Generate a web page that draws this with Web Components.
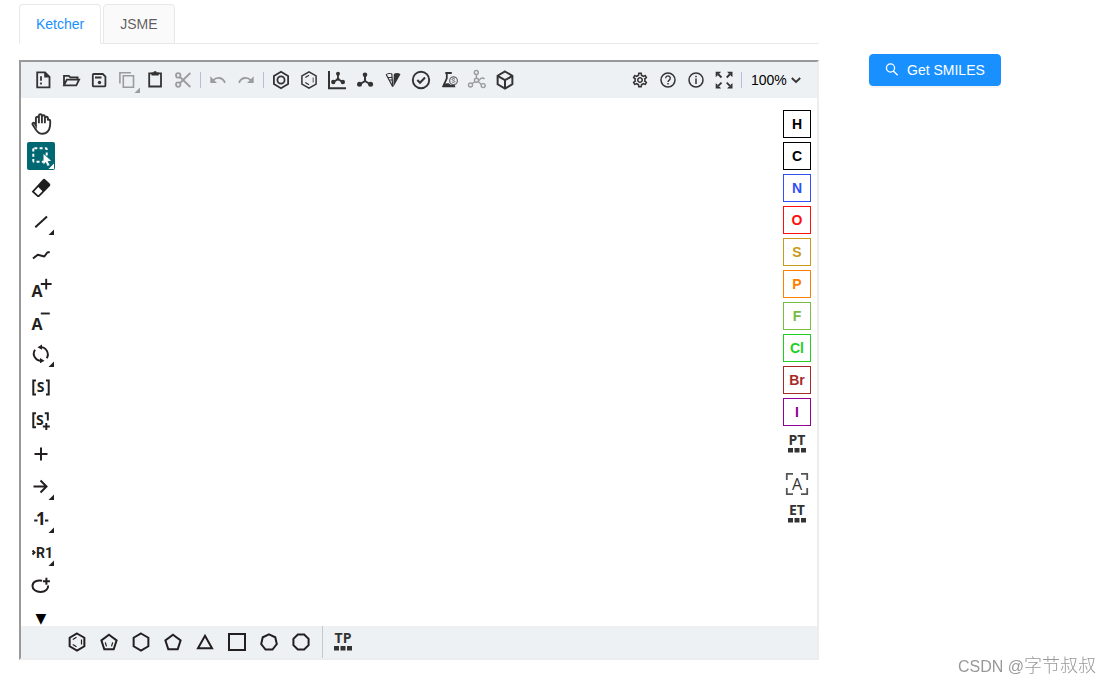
<!DOCTYPE html>
<html lang="en">
<head>
<meta charset="utf-8">
<meta name="viewport" content="width=device-width, initial-scale=1">
<title>Structure editor</title>
<style>
  :root {
    --primary: #1890ff;
    --bar-bg: #edf1f4;
    --icon: #333333;
    --icon-dim: #9a9c9f;
    --active-bg: #006873;
    --line: #e8e8e8;
  }

  body {
    margin: 0;
    background: #fff;
    font-family: "Liberation Sans", Arial, sans-serif;
    font-size: 14px;
    color: rgba(0, 0, 0, 0.65);
  }
</style>
</head>
<body>
<sketch-page>
  <tab-strip slot="main" tabs="Ketcher,JSME" active="Ketcher"></tab-strip>
  <ketcher-editor slot="main"></ketcher-editor>
  <search-button slot="side">Get SMILES</search-button>
  <page-mark slot="mark">CSDN @<span slot="cjk">字节叔叔</span></page-mark>
</sketch-page>

<script>
/**
 * Icon artwork, every icon on a 28x28 grid.
 * Default paint is a stroke in currentColor, ".f" parts are filled.
 */
const poly = (n, r, cy = 14, turn = -90) => {
  const pts = [];
  for (let i = 0; i < n; i++) {
    const a = ((turn + (360 / n) * i) * Math.PI) / 180;
    pts.push(`${(14 + r * Math.cos(a)).toFixed(2)},${(cy + r * Math.sin(a)).toFixed(2)}`);
  }
  return `<polygon points="${pts.join(" ")}"/>`;
};

const DOTS = `<path class="f" d="M5 18h5v4.500h-5zM11.500 18h5v4.500h-5zM18 18h5v4.500h-5z"/>`;

const ICONS = {
  "new": `<path d="M8.200 6.300h7.800l4.500 4.500v10.500H8.200z"/><path class="f" d="M15.200 6v5.600h5.600z"/><path d="M12 10.300v4.500M12 16.600v1.800"/>`,
  "open": `<path d="M7 19V9.800h4.800l1.600 1.600h7.200v2.200M7 19.300l2.800-5.600h12.300l-2.800 5.600z"/>`,
  "save": `<path d="M8.800 8h9l2.600 2.600v8.800a1 1 0 0 1-1 1H8.800a1 1 0 0 1-1-1V9a1 1 0 0 1 1-1zM10 11.500h6.500"/><circle class="f" cx="14.500" cy="16.500" r="1.700"/>`,
  "copy": `<path d="M6.900 17.500V6.800h11M10.300 9.800h10.200v11.400H10.300z" stroke-width="1.600"/>`,
  "paste": `<path d="M8.200 7.300h11.800v13.200H8.200z"/><path class="f" d="M10.500 6.500h2a1.600 1.600 0 0 1 3.200 0h2v3h-7.200z"/>`,
  "cut": `<circle cx="9.200" cy="9.400" r="2.200"/><circle cx="9.200" cy="18.600" r="2.200"/><path d="M11 11l10.300 10M11 17L21.300 7"/>`,
  "undo": `<path d="M9 14.400c3.500-3.600 9.600-3.600 12 2.400"/><path class="f" d="M6.300 10.300v6.700h6.700z"/>`,
  "redo": `<path d="M19 14.400c-3.500-3.600-9.600-3.600-12 2.400"/><path class="f" d="M21.700 10.300v6.700h-6.700z"/>`,
  "arom": poly(6, 8.2) + `<circle cx="14" cy="14" r="3.600"/>`,
  "dearom": `<g stroke-width="1.500">${poly(6, 8.2)}<path d="M10.300 11.500l3.700-2.200M10.300 16.500l3.700 2.200" stroke-width="1.200"/><path d="M18.200 11.500v5" stroke="#8a8c8f"/></g>`,
  "layout": `<path d="M6 5v17.200h17" stroke-width="2"/><path d="M15 7.800v5.200l-4.500 3M15 13l4.500 3"/><g class="f"><circle cx="15" cy="7.800" r="2"/><circle cx="10.300" cy="16" r="2.200"/><circle cx="19.800" cy="16" r="2.200"/><circle cx="15" cy="13" r="1.500"/></g>`,
  "clean": `<path d="M14 9v6l-5.500 3.500M14 15l5.500 3.500" stroke-width="2"/><g class="f"><circle cx="14" cy="8.800" r="2.300"/><circle cx="8.500" cy="18.300" r="2.500"/><circle cx="19.600" cy="18.300" r="2.500"/></g>`,
  "cip": `<path class="f" d="M14.300 21l.5-13c2.200-1.400 4.600-1.200 6.700.3z"/><path d="M7.200 8.500l6.500 12.300M12.800 7.800l.9 12.500" stroke-width="1.200"/><path d="M7 8.700c2-1.500 4-1.500 6-.7M9 11.500h4M10.500 14h2.800" stroke-width="1"/>`,
  "check": `<circle cx="14" cy="14" r="8.200" stroke-width="1.900"/><path d="M10.300 14l2.700 2.700 5-5.200" stroke-width="2"/>`,
  "calc": `<path d="M10.300 7h6.500M11.800 7v5.300L8.300 20h11.500"/><path class="f" d="M9 17.500l-1.500 3.700h13l-1-2-4-.5-2-1.500z"/><circle cx="18.500" cy="14.800" r="3.900" fill="#edf1f4" stroke="#66686b" stroke-width="1.200"/><path d="M20 13.300c-1-1-3-.8-3 .2s2.800 1 2.800 2-2 1.200-3 .3" stroke="#66686b" stroke-width="1"/>`,
  "mole": `<g stroke-width="1.400"><circle cx="13.300" cy="6.500" r="2"/><circle cx="13.500" cy="14.300" r="2"/><circle cx="7.500" cy="19" r="2"/><circle cx="20.200" cy="19.600" r="2"/><path d="M13.400 8.500v3.800M12 15.600l-3 2.200M15.200 15.500l3.200 2.900M15.500 14.300c1.500.2 1.500-2.300 3.500-2.300 1 0 2 .3 2.500 1"/></g>`,
  "cube": `<g stroke-width="2">${poly(6, 8.5)}<path d="M7 10.200l7 4 7-4M14 14.200v8"/></g>`,
  "settings": `<g class="f" transform="translate(5 5) scale(.75)"><path d="M19.430 12.980c.04-.32.07-.64.07-.98 0-.34-.03-.66-.07-.98l2.110-1.650c.19-.15.24-.42.12-.64l-2-3.460c-.09-.16-.26-.25-.44-.25-.06 0-.12.01-.17.03l-2.490 1c-.52-.4-1.080-.73-1.690-.98l-.38-2.650C14.460 2.180 14.250 2 14 2h-4c-.25 0-.46.18-.49.42l-.38 2.650c-.61.25-1.170.59-1.690.98l-2.490-1c-.06-.02-.12-.03-.18-.03-.17 0-.34.09-.43.25l-2 3.460c-.13.22-.07.49.12.64l2.110 1.650c-.04.32-.07.65-.07.98 0 .33.03.66.07.98l-2.110 1.650c-.19.15-.24.42-.12.64l2 3.460c.09.16.26.25.44.25.06 0 .12-.01.17-.03l2.490-1c.52.4 1.080.73 1.690.98l.38 2.650c.03.24.24.42.49.42h4c.25 0 .46-.18.49-.42l.38-2.650c.61-.25 1.170-.59 1.690-.98l2.490 1c.06.02.12.03.18.03.17 0 .34-.09.43-.25l2-3.460c.12-.22.07-.49-.12-.64l-2.110-1.650zm-1.980-1.710c.04.31.05.52.05.73 0 .21-.02.43-.05.73l-.14 1.130.89.7 1.080.84-.7 1.210-1.270-.51-1.040-.42-.9.68c-.43.32-.84.56-1.250.73l-1.060.43-.16 1.130-.2 1.350h-1.400l-.19-1.350-.16-1.130-1.060-.43c-.43-.18-.83-.41-1.230-.71l-.91-.7-1.060.43-1.270.51-.7-1.210 1.080-.84.89-.7-.14-1.130c-.03-.31-.05-.54-.05-.74s.02-.43.05-.73l.14-1.130-.89-.7-1.080-.84.7-1.210 1.270.51 1.040.42.9-.68c.43-.32.84-.56 1.250-.73l1.060-.43.16-1.130.2-1.350h1.390l.19 1.350.16 1.130 1.060.43c.43.18.83.41 1.230.71l.91.7 1.060-.43 1.270-.51.7 1.210-1.070.85-.89.7.14 1.130zM12 8c-2.210 0-4 1.790-4 4s1.790 4 4 4 4-1.790 4-4-1.790-4-4-4zm0 6c-1.100 0-2-.9-2-2s.9-2 2-2 2 .9 2 2-.9 2-2 2z"/></g>`,
  "help": `<circle cx="14" cy="14" r="7" stroke-width="1.500"/><path d="M11.700 12.300a2.300 2.300 0 1 1 3.700 1.700c-.9.7-1.400 1-1.400 2M14 17v1.500" stroke-width="1.400"/>`,
  "info": `<circle cx="14" cy="14" r="7" stroke-width="1.500"/><path d="M14 12.500v5.500M14 9.800v1.400" stroke-width="1.500"/>`,
  "fullscreen": `<path d="M7.500 7.500l4 4M20.700 7.500l-4 4M7.500 20.700l4-4M20.700 20.700l-4-4"/><path class="f" d="M5.700 5.700h5.300l-1.300 1.800H7.500v2.200L5.700 11zM22.500 5.700v5.300l-1.800-1.300V7.500h-2.200L17.200 5.700zM5.700 22.500v-5.300l1.800 1.300v2.200h2.200l1.300 1.800zM22.500 22.500h-5.300l1.300-1.800h2.200v-2.200l1.800-1.300z"/>`,
  "hand": `<path d="M8.900 15.500V8.300a1.500 1.500 0 0 1 3 0v5V5.800a1.500 1.500 0 0 1 3 0v7.500-6.500a1.500 1.500 0 0 1 3 0v6.500-5a1.500 1.500 0 0 1 3 0v2.200a1.200 1.200 0 0 1 2.300.3c.2 3.700-.1 7.700-2 10-1.500 1.900-3.300 2.900-5.800 2.900-3.400 0-5-1.800-6.300-3.800l-3.500-5.300c-.7-1.300.8-2.300 1.900-1.500z" stroke-width="1.900"/>`,
  "select": `<rect x="6.300" y="6.300" width="13.400" height="13.400" rx="1" stroke-dasharray="3 2.300" stroke-width="2"/><path class="f" d="M16.500 12l7.600 6.800-3.500.4 2 3.900-2 1-1.900-4-2.200 2.400z" stroke="#006873" stroke-width=".6"/>`,
  "erase": `<path d="M5.900 17.600L16.400 6.100a1 1 0 0 1 1.400 0l4.300 4a1 1 0 0 1 0 1.500L12 21.800a1 1 0 0 1-1.400 0z" stroke="#1e1e1e" stroke-width="1.700"/><path fill="#1e1e1e" stroke="none" d="M10.600 12.200l6-6.300h1.500l4.400 4.400v1.300l-6.200 6.300z"/>`,
  "bond": `<path d="M8.300 19.300L20 8.500" stroke-width="2"/>`,
  "chain": `<path d="M6 17.500l4.800-3.800 6.500 1.800 3-4 2.400-.5" stroke-width="2" stroke-linejoin="round"/>`,
  "charge-plus": `<text x="4.500" y="23" font-size="16">A</text><path d="M19.200 4.800v10.600M13.800 10h10.800" stroke-width="1.900"/>`,
  "charge-minus": `<text x="4.500" y="22.500" font-size="16">A</text><path d="M13.800 6.500h9" stroke-width="1.900"/>`,
  "rotate": `<path d="M19.700 18.200a7.200 7.200 0 0 0-6.700-11M8 9.700a7.200 7.200 0 0 0 6.700 11.100" stroke-width="1.900"/><path class="f" d="M10.500 7.300l4.500-2.800v5.200zM17.500 20.700l-4.500-2.600v5.200z"/>`,
  "sgroup": `<path d="M9 7.500H6.300v14H9M19 7.500h2.700v14H19" stroke-width="2"/><text x="9.800" y="19" font-size="14">S</text>`,
  "sgroup-data": `<path d="M9 7.300H6.300v14H9M17.800 7.300h3v7.200M19.300 17v7M15.800 20.500h7" stroke-width="2"/><text x="9" y="18.500" font-size="14">S</text>`,
  "plus": `<path d="M14 7.500v13M7.500 14h13" stroke-width="2"/>`,
  "arrow": `<path d="M6.500 13.500h12.800M13.500 7.500l6 6-6 6" stroke-width="2"/>`,
  "map": `<path d="M7.200 14.500h3.300M18 14.500h3.300" stroke-width="2"/><text x="9" y="19" font-size="17">1</text>`,
  "rgroup": `<path d="M5.500 11.500l2 2-2 2" stroke-width="2"/><text x="9" y="18.500" font-size="14" class="n">R1</text>`,
  "shape": `<path d="M15 8.700c-5-1.200-9.500 1.500-9.500 5.300 0 3.500 3.500 6 8 6 4.800 0 8.200-3 7.500-6.500M19.400 5.800v7M15.900 9.300h7" stroke-width="2"/>`,
  "benzene": poly(6, 8.5) + `<path d="M9.800 11.500l3.700-2.200M9.800 16.500l3.700 2.200M18.500 11.500v5" stroke-width="1.200"/>`,
  "cyclopentadiene": poly(5, 8, 14.8) + `<path d="M10.300 14.300l1.200 4M17.700 14.300l-1.200 4" stroke-width="1.200"/>`,
  "cyclohexane": poly(6, 8.5),
  "cyclopentane": poly(5, 8, 14.8),
  "cyclopropane": `<path d="M14 7.800l7 12.400H7z"/>`,
  "cyclobutane": `<path d="M6 6h16v16H6z"/>`,
  "cycloheptane": poly(7, 8, 14.3),
  "cyclooctane": poly(8, 8.2, 14, -67.5),
  "pt": `<text x="14" y="15" font-size="14" text-anchor="middle">PT</text>` + DOTS,
  "et": `<text x="14" y="15" font-size="14" text-anchor="middle">ET</text>` + DOTS,
  "tp": `<text x="14" y="15" font-size="14" text-anchor="middle">TP</text>` + DOTS,
  "any": `<path d="M3.800 10V3.800H10M18 3.800h6.200V10M3.800 18v6.200H10M18 24.200h6.200V18" stroke="#555"/><text x="14" y="20" font-size="16" text-anchor="middle" class="r">A</text>`
};

/** Square tool button: icon, label, and optional "more" corner. */
class IconButton extends HTMLElement {
  constructor() {
    super();
    this.attachShadow({ mode: "open" });
  }

  connectedCallback() {
    const name = this.getAttribute("icon");
    const more = this.hasAttribute("more");
    this.shadowRoot.innerHTML = `
      <style>
        :host {
          display: block;
          flex: none;
          width: 28px;
          height: 28px;
          color: var(--icon);
        }
        :host([dim]) { color: var(--icon-dim); }
        :host([dark]) { color: #231f20; }
        button {
          display: block;
          width: 100%;
          height: 100%;
          padding: 0;
          border: 0;
          border-radius: 2px;
          background: transparent;
          color: inherit;
          cursor: pointer;
        }
        :host([active]) button { background: var(--active-bg); color: #fff; }
        svg {
          display: block;
          width: 28px;
          height: 28px;
          overflow: visible;
          fill: none;
          stroke: currentColor;
          stroke-width: 1.800;
        }
        :host([dark]) svg { stroke-width: 2; }
        .f { fill: currentColor; stroke: none; }
        text {
          fill: currentColor;
          stroke: none;
          font-family: "Open Sans", "Noto Sans", sans-serif;
          font-weight: 700;
        }
        text.r { font-weight: 400; }
        text.n { font-family: Roboto, sans-serif; }
        .corner { fill: currentColor; stroke: none; }
      </style>
      <button type="button" aria-label="${name}">
        <svg viewBox="0 0 28 28" aria-hidden="true">
          ${ICONS[name]}
          ${more ? `<path class="corner" d="M27 21.500v5.500h-5.500z"/>` : ""}
        </svg>
      </button>
    `;
  }
}
customElements.define("icon-button", IconButton);

/** Boxed chemical element, coloured by the "color" attribute. */
class AtomButton extends HTMLElement {
  constructor() {
    super();
    this.attachShadow({ mode: "open" });
  }

  connectedCallback() {
    this.shadowRoot.innerHTML = `
      <style>
        :host { display: block; width: 28px; height: 28px; }
        button {
          display: block;
          width: 100%;
          height: 100%;
          padding: 0;
          border: 1px solid currentColor;
          background: #fff;
          color: ${this.getAttribute("color")};
          font: bold 14px/26px "Liberation Sans", Arial, sans-serif;
          text-align: center;
          cursor: pointer;
        }
      </style>
      <button type="button"><slot></slot></button>
    `;
  }
}
customElements.define("atom-button", AtomButton);

/** Zoom drop-down at the end of the top bar. */
class ZoomSelect extends HTMLElement {
  constructor() {
    super();
    this.attachShadow({ mode: "open" });
    this.shadowRoot.innerHTML = `
      <style>
        :host { display: grid; align-items: center; width: 64px; height: 28px; }
        select, svg { grid-area: 1 / 1; }
        select {
          appearance: none;
          width: 100%;
          height: 28px;
          padding: 0 0 0 6px;
          border: 0;
          background: transparent;
          color: #000;
          font: 14px/28px "Liberation Sans", Arial, sans-serif;
        }
        svg {
          justify-self: end;
          width: 10px;
          height: 10px;
          margin-right: 8px;
          fill: none;
          stroke: var(--icon);
          stroke-width: 1.800;
          pointer-events: none;
        }
      </style>
      <select aria-label="Zoom">
        <option>50%</option>
        <option selected>100%</option>
        <option>200%</option>
      </select>
      <svg viewBox="0 0 10 10" aria-hidden="true"><path d="M.8 3l4.200 4 4.200-4"/></svg>
    `;
  }
}
customElements.define("zoom-select", ZoomSelect);

/** The editor frame: top, left, right and bottom bars around the canvas. */
class KetcherEditor extends HTMLElement {
  constructor() {
    super();
    this.attachShadow({ mode: "open" });
  }

  connectedCallback() {
    this.render();
  }

  // "name:flags", with "+" for a corner, "-" for a disabled look, "*" for the active tool
  _tools(list, extra = "") {
    return list.split(" ").map((item) => {
      const [name, flags = ""] = item.split(":");
      const attrs = [
        flags.includes("+") ? "more" : "",
        flags.includes("-") ? "dim" : "",
        flags.includes("*") ? "active" : "",
        extra
      ].join(" ");
      return `<icon-button icon="${name}" ${attrs}></icon-button>`;
    }).join("");
  }

  _atoms() {
    const atoms = {
      H: "#000000", C: "#000000", N: "#304ff7", O: "#ff0d0d", S: "#c99a19",
      P: "#ff8000", F: "#78bc42", Cl: "#1fd01f", Br: "#a62929", I: "#940094"
    };
    return Object.entries(atoms)
      .map(([symbol, color]) => `<atom-button color="${color}">${symbol}</atom-button>`)
      .join("");
  }

  render() {
    this.shadowRoot.innerHTML = `
      <style>
        :host {
          display: grid;
          grid-template-columns: auto 1fr auto;
          grid-template-rows: 36px auto 32px;
          border: 2px solid;
          border-color: #999 #ededed #ededed #999;
          background: #fff;
        }
        .top, .bottom {
          grid-column: 1 / -1;
          display: flex;
          align-items: center;
          background: var(--bar-bg);
        }
        .top { padding: 0 8px; }
        .top .sep {
          width: 1px;
          height: 16px;
          margin: 0 3px;
          background: #b9bcdc;
        }
        .spacer { flex: 1; }
        .left { display: flex; flex-direction: column; gap: 6px; padding: 12px 6px 0; }
        .group { display: flex; flex-direction: column; gap: 5px; }
        .group.tight { gap: 4px; }
        .scroll {
          height: 20px;
          padding: 4px 0 0;
          border: 0;
          background: transparent;
          color: #000;
          font: 14px/16px "DejaVu Sans", sans-serif;
        }
        .right { grid-column: 3; display: flex; flex-direction: column; gap: 12px; padding: 12px 6px 0; }
        .right .last { gap: 2px; }
        .bottom { padding: 0 42px; gap: 4px; }
        .bottom .sep {
          align-self: stretch;
          width: 1px;
          margin: 0 2px 0 3px;
          background: #c4c8cb;
        }
      </style>
      <div class="top">
        ${this._tools("new open save copy:+- paste cut:-")}
        <span class="sep"></span>
        ${this._tools("undo:- redo:-")}
        <span class="sep"></span>
        ${this._tools("arom dearom layout clean cip check calc mole:- cube")}
        <span class="spacer"></span>
        ${this._tools("settings help info fullscreen")}
        <span class="sep"></span>
        <zoom-select></zoom-select>
      </div>
      <div class="left">
        <div class="group tight">${this._tools("hand select:*+ erase")}</div>
        <div class="group">${this._tools("bond:+ chain charge-plus charge-minus rotate:+ sgroup sgroup-data", "dark")}</div>
        <div class="group">${this._tools("plus arrow:+ map:+ rgroup:+ shape", "dark")}</div>
        <button class="scroll" type="button">▼</button>
      </div>
      <div class="right">
        <div class="group tight">${this._atoms()}${this._tools("pt")}</div>
        <div class="group last">${this._tools("any et")}</div>
      </div>
      <div class="bottom">
        ${this._tools("benzene cyclopentadiene cyclohexane cyclopentane cyclopropane cyclobutane cycloheptane cyclooctane", "dark")}
        <span class="sep"></span>
        ${this._tools("tp")}
      </div>
    `;
  }
}
customElements.define("ketcher-editor", KetcherEditor);

/** Card style tabs */
class TabStrip extends HTMLElement {
  constructor() {
    super();
    this.attachShadow({ mode: "open" });
  }

  connectedCallback() {
    this.render();
  }

  render() {
    const active = this.getAttribute("active");
    const tabs = this.getAttribute("tabs").split(",");
    this.shadowRoot.innerHTML = `
      <style>
        :host { display: block; margin-bottom: 16px; }
        .tabs {
          display: flex;
          gap: 2px;
          box-shadow: inset 0 -1px var(--line);
        }
        button {
          height: 40px;
          padding: 0 16px;
          border: 1px solid var(--line);
          border-radius: 4px 4px 0 0;
          background: #fafafa;
          color: rgba(0, 0, 0, 0.65);
          font: 14px/38px "Liberation Sans", Arial, sans-serif;
          cursor: pointer;
        }
        button[aria-selected="true"] {
          border-bottom-color: #fff;
          background: #fff;
          color: var(--primary);
        }
      </style>
      <div class="tabs" role="tablist">
        ${tabs.map((t) => `<button type="button" role="tab" aria-selected="${t === active}">${t}</button>`).join("")}
      </div>
    `;
    this.shadowRoot.querySelectorAll("button").forEach((btn) => {
      btn.addEventListener("click", () => {
        this.setAttribute("active", btn.textContent);
        this.render();
      });
    });
  }
}
customElements.define("tab-strip", TabStrip);

/** Primary button with a magnifier */
class SearchButton extends HTMLElement {
  constructor() {
    super();
    this.attachShadow({ mode: "open" });
    this.shadowRoot.innerHTML = `
      <style>
        :host { display: inline-block; }
        button {
          display: flex;
          align-items: center;
          gap: 8px;
          height: 32px;
          padding: 0 15px;
          border: 1px solid var(--primary);
          border-radius: 4px;
          background: var(--primary);
          box-shadow: 0 2px 0 rgba(0, 0, 0, 0.045);
          color: #fff;
          font: 14px/30px "Liberation Sans", Arial, sans-serif;
          white-space: nowrap;
          cursor: pointer;
        }
        svg { width: 14px; height: 14px; fill: none; stroke: #fff; stroke-width: 1.300; }
      </style>
      <button type="button">
        <svg viewBox="0 0 14 14" aria-hidden="true"><circle cx="5.500" cy="5" r="4.100"/><path d="M8.400 8l4.300 4.300"/></svg>
        <slot></slot>
      </button>
    `;
  }
}
customElements.define("search-button", SearchButton);

/** Watermark floating over the page corner */
class PageMark extends HTMLElement {
  constructor() {
    super();
    this.attachShadow({ mode: "open" });
    this.shadowRoot.innerHTML = `
      <style>
        :host {
          position: fixed;
          right: 15px;
          bottom: 5px;
          color: #999;
          font: 16px/24px "Liberation Sans", Arial, sans-serif;
          white-space: nowrap;
        }
        ::slotted(span) {
          font: 300 18px/24px "Noto Sans CJK SC", sans-serif;
        }
      </style>
      <slot></slot><slot name="cjk"></slot>
    `;
  }
}
customElements.define("page-mark", PageMark);

/** Page columns */
class SketchPage extends HTMLElement {
  constructor() {
    super();
    this.attachShadow({ mode: "open" });
    this.shadowRoot.innerHTML = `
      <style>
        :host {
          display: grid;
          grid-template-columns: minmax(0, 1fr) 242px;
          gap: 50px;
          padding: 4px 0 0 19px;
        }
        main { min-width: 0; }
        aside { padding-top: 50px; }
      </style>
      <main><slot name="main"></slot></main>
      <aside><slot name="side"></slot></aside>
      <slot name="mark"></slot>
    `;
  }
}
customElements.define("sketch-page", SketchPage);
</script>
</body>
</html>
